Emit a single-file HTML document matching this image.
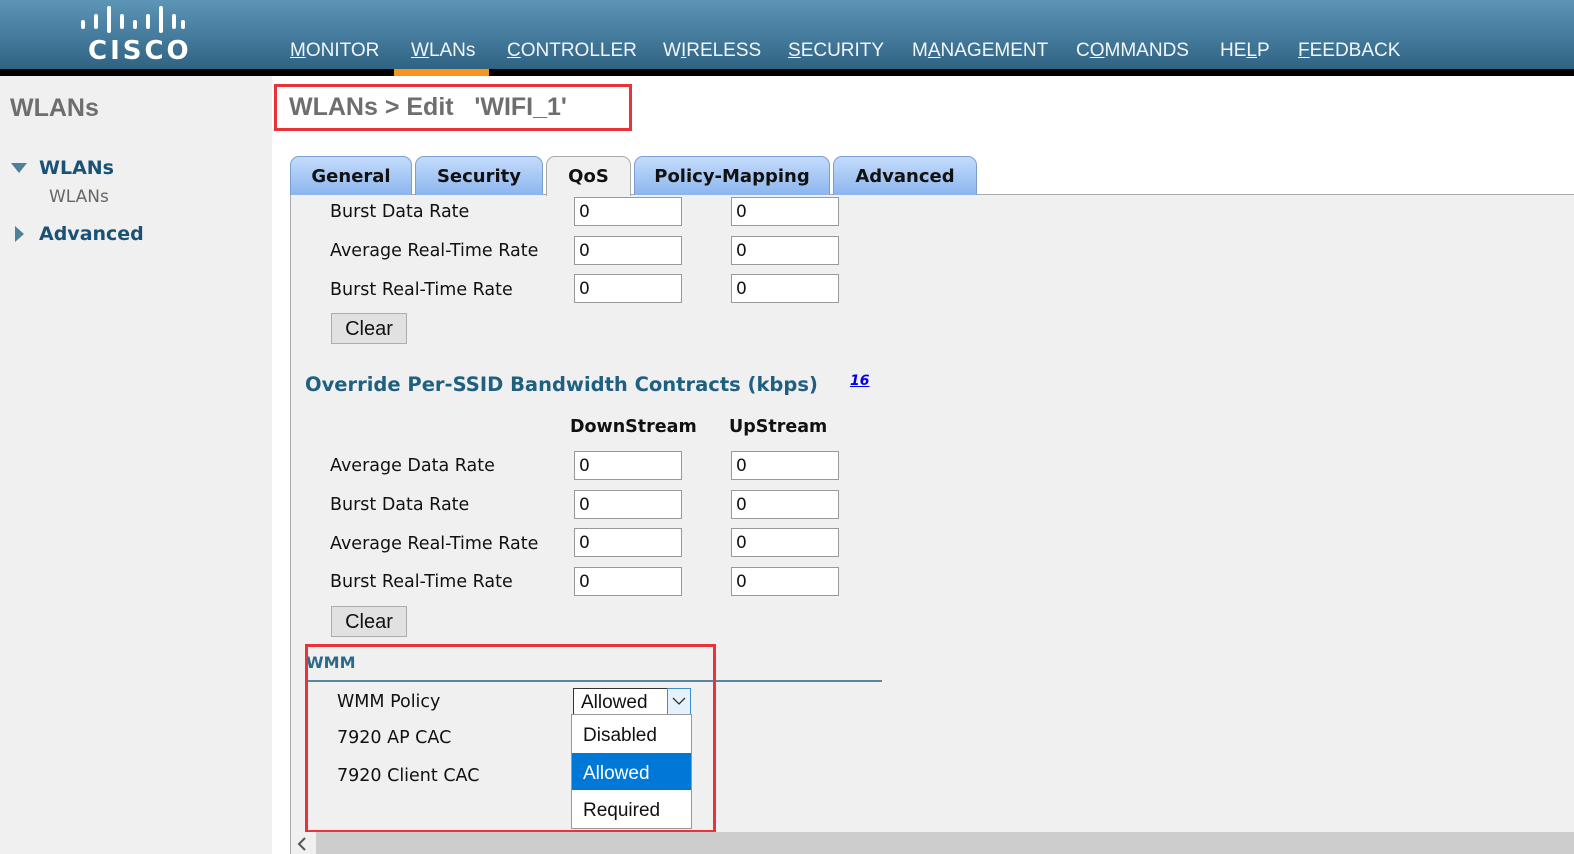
<!DOCTYPE html>
<html><head><meta charset="utf-8"><style>
*{margin:0;padding:0;box-sizing:border-box}
body{width:1574px;height:854px;overflow:hidden;background:#fff;font-family:"DejaVu Sans",Verdana,sans-serif;position:relative;color:#111}
.a{position:absolute;white-space:nowrap}
#hdr{position:absolute;left:0;top:0;width:1574px;height:69px;background:linear-gradient(#5d95b7,#2f6383)}
#bar{position:absolute;left:0;top:69px;width:1574px;height:7px;background:#000}
.nav{position:absolute;top:40px;font-family:"Liberation Sans",Arial,sans-serif;font-size:19px;color:#f2f6fa}
.nav u{text-decoration:underline}
#side{position:absolute;left:0;top:76px;width:272px;height:778px;background:#f0f0f0}
#panel{position:absolute;left:290px;top:194px;width:1284px;height:660px;background:#f0f0f0;border-left:1px solid #aaa;border-top:1px solid #aaa}
.tab{position:absolute;top:156px;height:39px;border:1px solid #7a9fcf;border-bottom:none;border-radius:9px 9px 0 0;background:linear-gradient(#c4dcfb,#8bb6ee);font-weight:bold;font-size:18px;text-align:center;line-height:40px;color:#111}
.lbl{position:absolute;font-size:17.5px;color:#111}
.inp{position:absolute;width:108px;height:29px;background:#fff;border:1px solid #999;font-size:17px;padding-left:4px;line-height:29px}
.btn{position:absolute;width:76px;height:31px;background:#e1e1e1;border:1px solid #adadad;font-family:"Liberation Sans",Arial,sans-serif;font-size:20px;text-align:center;line-height:31px}
.dd{font-family:"Liberation Sans",Arial,sans-serif;font-size:19px}
</style></head><body>
<div id="hdr"></div><div id="bar"></div>
<div class="a" style="left:394px;top:69px;width:95px;height:7px;background:#f7941d"></div>
<svg class="a" style="left:80px;top:5px" width="106" height="30">
<g fill="#fff">
<rect x="1" y="15" width="4" height="9" rx="2"/><rect x="14" y="9" width="4" height="15" rx="2"/><rect x="27" y="1" width="4" height="27" rx="2"/><rect x="40" y="9" width="4" height="15" rx="2"/><rect x="53" y="15" width="4" height="9" rx="2"/><rect x="66" y="9" width="4" height="15" rx="2"/><rect x="79" y="1" width="4" height="27" rx="2"/><rect x="92" y="9" width="4" height="15" rx="2"/><rect x="101" y="15" width="4" height="9" rx="2"/>
</g></svg>
<div class="a" style="left:88px;top:36px;font-family:'DejaVu Sans',sans-serif;font-weight:bold;font-size:26px;color:#fff;letter-spacing:3px">CISCO</div>
<div class="nav" style="left:290px"><u>M</u>ONITOR</div>
<div class="nav" style="left:411px"><u>W</u>LANs</div>
<div class="nav" style="left:507px"><u>C</u>ONTROLLER</div>
<div class="nav" style="left:663px">W<u>I</u>RELESS</div>
<div class="nav" style="left:788px"><u>S</u>ECURITY</div>
<div class="nav" style="left:912px">M<u>A</u>NAGEMENT</div>
<div class="nav" style="left:1076px">C<u>O</u>MMANDS</div>
<div class="nav" style="left:1220px">HE<u>L</u>P</div>
<div class="nav" style="left:1298px"><u>F</u>EEDBACK</div>

<div id="side"></div>
<div class="a" style="left:10px;top:94px;font-family:'Liberation Sans',Arial,sans-serif;font-weight:bold;font-size:25px;color:#6e6e6e">WLANs</div>
<svg class="a" style="left:11px;top:163px" width="16" height="12"><path d="M0 0H16L8 10Z" fill="#4f8098"/></svg>
<div class="a" style="left:39px;top:157px;font-weight:bold;font-size:19px;color:#1a5276">WLANs</div>
<div class="a" style="left:49px;top:187px;font-size:17px;color:#666">WLANs</div>
<svg class="a" style="left:15px;top:226px" width="10" height="16"><path d="M0 0V16L9 8Z" fill="#4f8098"/></svg>
<div class="a" style="left:39px;top:223px;font-weight:bold;font-size:19px;color:#1a5276">Advanced</div>

<div class="a" style="left:274px;top:84px;width:358px;height:47px;border:3px solid #e8333a"></div>
<div class="a" style="left:289px;top:93px;font-family:'Liberation Sans',Arial,sans-serif;font-weight:bold;font-size:25px;color:#6e6e6e">WLANs &gt; Edit &nbsp;&nbsp;'WIFI_1'</div>

<div id="panel"></div>
<div class="tab" style="left:290px;width:122px">General</div>
<div class="tab" style="left:415px;width:128px">Security</div>
<div class="tab" style="left:546px;width:85px;background:#f0f0f0;border-color:#aaa;height:40px">QoS</div>
<div class="tab" style="left:634px;width:196px">Policy-Mapping</div>
<div class="tab" style="left:833px;width:144px">Advanced</div>

<div class="lbl" style="left:330px;top:202px">Burst Data Rate</div>
<div class="lbl" style="left:330px;top:241px">Average Real-Time Rate</div>
<div class="lbl" style="left:330px;top:280px">Burst Real-Time Rate</div>
<div class="inp" style="left:574px;top:197px">0</div><div class="inp" style="left:731px;top:197px">0</div>
<div class="inp" style="left:574px;top:236px">0</div><div class="inp" style="left:731px;top:236px">0</div>
<div class="inp" style="left:574px;top:274px">0</div><div class="inp" style="left:731px;top:274px">0</div>
<div class="btn" style="left:331px;top:313px">Clear</div>

<div class="a" style="left:305px;top:373px;font-weight:bold;font-size:19.5px;color:#1f5f80">Override Per-SSID Bandwidth Contracts (kbps)</div>
<div class="a" style="left:850px;top:373px;font-size:14px;font-weight:bold;font-style:italic;color:#0000ee;text-decoration:underline">16</div>
<div class="a" style="left:570px;top:417px;font-weight:bold;font-size:17.5px">DownStream</div>
<div class="a" style="left:729px;top:417px;font-weight:bold;font-size:17.5px">UpStream</div>
<div class="lbl" style="left:330px;top:456px">Average Data Rate</div>
<div class="lbl" style="left:330px;top:495px">Burst Data Rate</div>
<div class="lbl" style="left:330px;top:534px">Average Real-Time Rate</div>
<div class="lbl" style="left:330px;top:572px">Burst Real-Time Rate</div>
<div class="inp" style="left:574px;top:451px">0</div><div class="inp" style="left:731px;top:451px">0</div>
<div class="inp" style="left:574px;top:490px">0</div><div class="inp" style="left:731px;top:490px">0</div>
<div class="inp" style="left:574px;top:528px">0</div><div class="inp" style="left:731px;top:528px">0</div>
<div class="inp" style="left:574px;top:567px">0</div><div class="inp" style="left:731px;top:567px">0</div>
<div class="btn" style="left:331px;top:606px">Clear</div>

<div class="a" style="left:306px;top:653px;font-weight:bold;font-size:16px;color:#2b6a8a">WMM</div>
<div class="a" style="left:305px;top:680px;width:577px;height:2px;background:#5a86a0"></div>
<div class="lbl" style="left:337px;top:692px">WMM Policy</div>
<div class="lbl" style="left:337px;top:728px">7920 AP CAC</div>
<div class="lbl" style="left:337px;top:766px">7920 Client CAC</div>
<div class="a dd" style="left:573px;top:688px;width:118px;height:27px;background:#fff;border:1px solid #333;padding-left:7px;line-height:27px">Allowed</div>
<div class="a" style="left:667px;top:688px;width:24px;height:27px;background:#e5f1fb;border:1px solid #3c8fd6"></div>
<svg class="a" style="left:672px;top:697px" width="14" height="9"><path d="M1 1L7 7L13 1" fill="none" stroke="#333" stroke-width="1.3"/></svg>
<div class="a" style="left:571px;top:714px;width:121px;height:115px;background:#fff;border:1px solid #999"></div>
<div class="a dd" style="left:583px;top:725px">Disabled</div>
<div class="a" style="left:572px;top:753px;width:119px;height:37px;background:#0078d7"></div>
<div class="a dd" style="left:583px;top:763px;color:#fff">Allowed</div>
<div class="a dd" style="left:583px;top:800px">Required</div>

<div class="a" style="left:305px;top:644px;width:411px;height:189px;border:3px solid #e8333a"></div>

<div class="a" style="left:291px;top:832px;width:1283px;height:22px;background:#cdcdcd"></div>
<div class="a" style="left:291px;top:832px;width:25px;height:22px;background:#f0f0f0"></div>
<svg class="a" style="left:297px;top:837px" width="10" height="14"><path d="M8 1L2 7L8 13" fill="none" stroke="#555" stroke-width="2"/></svg>
</body></html>
